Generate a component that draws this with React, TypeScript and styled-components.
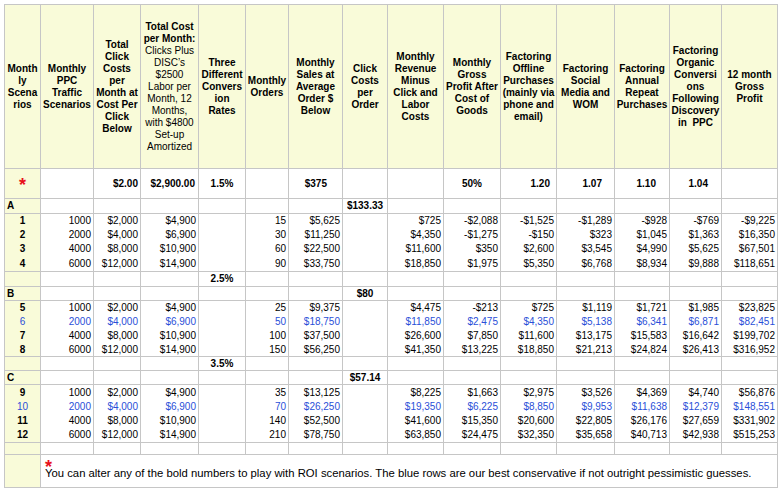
import React from "react";
import styled, { createGlobalStyle, css } from "styled-components";

const GlobalStyle = createGlobalStyle`
  html, body { margin: 0; padding: 0; background: #ffffff; }
  body { font-family: "Liberation Sans", Arial, sans-serif; color: #000; }
`;

const YELLOW = "#f9fbd9";
const GRID = "#c6c6c6";
const BLUE = "#2a4fd8";
const RED = "#e8101a";

const Page = styled.div`
  padding: 4px;
`;

const Sheet = styled.table`
  border-collapse: collapse;
  table-layout: fixed;
  width: 773px;
  font-size: 10px;
`;

const HeadCell = styled.th`
  background: ${YELLOW};
  border: 1px solid ${GRID};
  height: 163px;
  padding: 0 1px;
  font-size: 10px;
  line-height: 12px;
  font-weight: bold;
  text-align: center;
  vertical-align: middle;
  white-space: nowrap;
  overflow: hidden;
`;

const Plain = styled.span`
  font-weight: normal;
`;

type Align = "left" | "center" | "right";

const Cell = styled.td<{
  $align?: Align;
  $bold?: boolean;
  $blue?: boolean;
  $label?: boolean;
  $openTop?: boolean;
  $openBottom?: boolean;
  $h?: number;
  $padR?: number;
}>`
  border: 1px solid ${GRID};
  ${(p) => p.$openTop && css`border-top-style: hidden;`}
  ${(p) => p.$openBottom && css`border-bottom-style: hidden;`}
  background: ${(p) => (p.$label ? YELLOW : "#ffffff")};
  height: ${(p) => p.$h ?? 14}px;
  padding: 0 ${(p) => p.$padR ?? 2}px 0 2px;
  line-height: 12px;
  text-align: ${(p) => p.$align ?? "right"};
  font-weight: ${(p) => (p.$bold ? "bold" : "normal")};
  color: ${(p) => (p.$blue ? BLUE : "#000")};
  white-space: nowrap;
  overflow: hidden;
  vertical-align: middle;
`;

const Star = styled.span`
  color: ${RED};
  font-weight: bold;
  font-size: 18px;
  line-height: 10px;
  display: inline-block;
  vertical-align: -4px;
`;

const NoteCell = styled.td`
  border: 1px solid ${GRID};
  height: 32px;
  padding: 0 0 0 4px;
  font-size: 11.3px;
  line-height: 12px;
  vertical-align: top;
  white-space: nowrap;
`;

const NoteStar = styled.div`
  color: ${RED};
  font-weight: bold;
  font-size: 18px;
  line-height: 24px;
  height: 12px;
`;

const NoteText = styled.div`
  line-height: 12px;
`;

const widths = [36, 53, 47, 58, 47, 43, 54, 45, 56, 57, 56, 58, 55, 52, 56];

const headers: React.ReactNode[] = [
  <>Month<br />ly<br />Scena<br />rios</>,
  <>Monthly<br />PPC<br />Traffic<br />Scenarios</>,
  <>Total<br />Click<br />Costs<br />per<br />Month at<br />Cost Per<br />Click<br />Below</>,
  <>
    Total Cost<br />per Month:<br />
    <Plain>Clicks Plus<br />DISC’s<br />$2500<br />Labor per<br />Month, 12<br />Months,<br />with $4800<br />Set-up<br />Amortized</Plain>
  </>,
  <>Three<br />Different<br />Convers<br />ion<br />Rates</>,
  <>Monthly<br />Orders</>,
  <>Monthly<br />Sales at<br />Average<br />Order $<br />Below</>,
  <>Click<br />Costs<br />per<br />Order</>,
  <>Monthly<br />Revenue<br />Minus<br />Click and<br />Labor<br />Costs</>,
  <>Monthly<br />Gross<br />Profit After<br />Cost of<br />Goods</>,
  <>Factoring<br />Offline<br />Purchases<br />(mainly via<br />phone and<br />email)</>,
  <>Factoring<br />Social<br />Media and<br />WOM</>,
  <>Factoring<br />Annual<br />Repeat<br />Purchases</>,
  <>Factoring<br />Organic<br />Conversi<br />ons<br />Following<br />Discovery<br />in&nbsp; PPC</>,
  <>12 month<br />Gross<br />Profit</>,
];

type Group = {
  label: string;
  perOrder: string;
  labelH: number;
  rate?: string;
  rateH?: number;
  rowH: number[];
  rows: { n: string; blue?: boolean; v: string[] }[];
};

const groups: Group[] = [
  {
    label: "A",
    perOrder: "$133.33",
    labelH: 14,
    rowH: [14, 14, 14, 15],
    rows: [
      { n: "1", v: ["1000", "$2,000", "$4,900", "", "15", "$5,625", "", "$725", "-$2,088", "-$1,525", "-$1,289", "-$928", "-$769", "-$9,225"] },
      { n: "2", v: ["2000", "$4,000", "$6,900", "", "30", "$11,250", "", "$4,350", "-$1,275", "-$150", "$323", "$1,045", "$1,363", "$16,350"] },
      { n: "3", v: ["4000", "$8,000", "$10,900", "", "60", "$22,500", "", "$11,600", "$350", "$2,600", "$3,545", "$4,990", "$5,625", "$67,501"] },
      { n: "4", v: ["6000", "$12,000", "$14,900", "", "90", "$33,750", "", "$18,850", "$1,975", "$5,350", "$6,768", "$8,934", "$9,888", "$118,651"] },
    ],
  },
  {
    label: "B",
    perOrder: "$80",
    labelH: 13,
    rate: "2.5%",
    rateH: 14,
    rowH: [14, 14, 14, 13],
    rows: [
      { n: "5", v: ["1000", "$2,000", "$4,900", "", "25", "$9,375", "", "$4,475", "-$213", "$725", "$1,119", "$1,721", "$1,985", "$23,825"] },
      { n: "6", blue: true, v: ["2000", "$4,000", "$6,900", "", "50", "$18,750", "", "$11,850", "$2,475", "$4,350", "$5,138", "$6,341", "$6,871", "$82,451"] },
      { n: "7", v: ["4000", "$8,000", "$10,900", "", "100", "$37,500", "", "$26,600", "$7,850", "$11,600", "$13,175", "$15,583", "$16,642", "$199,702"] },
      { n: "8", v: ["6000", "$12,000", "$14,900", "", "150", "$56,250", "", "$41,350", "$13,225", "$18,850", "$21,213", "$24,824", "$26,413", "$316,952"] },
    ],
  },
  {
    label: "C",
    perOrder: "$57.14",
    labelH: 13,
    rate: "3.5%",
    rateH: 13,
    rowH: [15, 14, 14, 14],
    rows: [
      { n: "9", v: ["1000", "$2,000", "$4,900", "", "35", "$13,125", "", "$8,225", "$1,663", "$2,975", "$3,526", "$4,369", "$4,740", "$56,876"] },
      { n: "10", blue: true, v: ["2000", "$4,000", "$6,900", "", "70", "$26,250", "", "$19,350", "$6,225", "$8,850", "$9,953", "$11,638", "$12,379", "$148,551"] },
      { n: "11", v: ["4000", "$8,000", "$10,900", "", "140", "$52,500", "", "$41,600", "$15,350", "$20,600", "$22,805", "$26,176", "$27,659", "$331,902"] },
      { n: "12", v: ["6000", "$12,000", "$14,900", "", "210", "$78,750", "", "$63,850", "$24,475", "$32,350", "$35,658", "$40,713", "$42,938", "$515,253"] },
    ],
  },
];

const blanks = (count: number, h: number, from = 0) =>
  Array.from({ length: count }, (_, i) => <Cell key={`b${from + i}`} $h={h} />);

function RateRow({ rate, h }: { rate: string; h: number }) {
  return (
    <tr>
      <Cell $label $h={h} />
      {blanks(3, h)}
      <Cell $align="center" $bold $h={h}>{rate}</Cell>
      {blanks(10, h, 10)}
    </tr>
  );
}

function GroupRows({ g }: { g: Group }) {
  return (
    <>
      {g.rate && <RateRow rate={g.rate} h={g.rateH ?? 14} />}
      <tr>
        <Cell $label $align="left" $bold $h={g.labelH}>{g.label}</Cell>
        {blanks(6, g.labelH)}
        <Cell $align="center" $bold $h={g.labelH}>{g.perOrder}</Cell>
        {blanks(7, g.labelH, 10)}
      </tr>
      {g.rows.map((r, i) => {
        const openTop = i > 0;
        const openBottom = i < g.rows.length - 1;
        const h = g.rowH[i];
        return (
          <tr key={r.n}>
            <Cell
              $label
              $align="center"
              $bold={!r.blue}
              $blue={r.blue}
              $openTop={openTop}
              $openBottom={openBottom}
              $h={h}
            >
              {r.n}
            </Cell>
            {r.v.map((v, j) => (
              <Cell key={j} $blue={r.blue} $openTop={openTop} $openBottom={openBottom} $h={h}>
                {v}
              </Cell>
            ))}
          </tr>
        );
      })}
    </>
  );
}

const S = 29;

export default function App() {
  return (
    <>
      <GlobalStyle />
      <Page>
        <Sheet>
          <colgroup>
            {widths.map((w, i) => (
              <col key={i} style={{ width: w }} />
            ))}
          </colgroup>
          <thead>
            <tr>
              {headers.map((h, i) => (
                <HeadCell key={i}>{h}</HeadCell>
              ))}
            </tr>
          </thead>
          <tbody>
            <tr>
              <Cell $label $align="center" $h={S}>
                <Star>*</Star>
              </Cell>
              <Cell $h={S} />
              <Cell $bold $h={S}>$2.00</Cell>
              <Cell $bold $h={S} $padR={3}>$2,900.00</Cell>
              <Cell $bold $align="center" $h={S}>1.5%</Cell>
              <Cell $h={S} />
              <Cell $bold $h={S} $padR={15}>$375</Cell>
              <Cell $h={S} />
              <Cell $h={S} />
              <Cell $bold $align="center" $h={S}>50%</Cell>
              <Cell $bold $h={S} $padR={6}>1.20</Cell>
              <Cell $bold $h={S} $padR={12}>1.07</Cell>
              <Cell $bold $h={S} $padR={13}>1.10</Cell>
              <Cell $bold $h={S} $padR={13}>1.04</Cell>
              <Cell $h={S} />
            </tr>
            {groups.map((g) => (
              <GroupRows key={g.label} g={g} />
            ))}
            <tr>
              <Cell $label $h={11} />
              {blanks(14, 11)}
            </tr>
            <tr>
              <Cell $label $h={32} />
              <NoteCell colSpan={14}>
                <NoteStar>*</NoteStar>
                <NoteText>
                  You can alter any of the bold numbers to play with ROI scenarios. The blue rows are our best conservative if not outright pessimistic guesses.
                </NoteText>
              </NoteCell>
            </tr>
          </tbody>
        </Sheet>
      </Page>
    </>
  );
}
